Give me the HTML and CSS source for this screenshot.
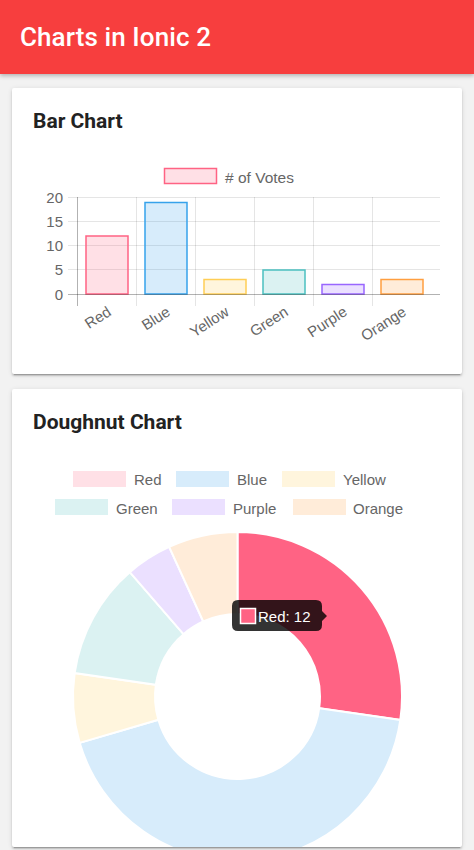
FILE: index.html
```html
<!DOCTYPE html>
<html>
<head>
<meta charset="utf-8">
<link rel="stylesheet" href="styles.css">
</head>
<body>
<header class="toolbar"><div class="toolbar-title">Charts in Ionic 2</div></header>
<main class="content">
  <section class="card card-bar">
    <h2 class="card-title">Bar Chart</h2>
    <svg class="chart" width="450" height="241" viewBox="0 0 450 241">
      <g class="legend">
        <rect x="152.5" y="35.5" width="52" height="15" fill="rgba(255,99,132,0.2)" stroke="#ff6384" stroke-width="1.5"/>
        <text x="213" y="49.5" class="lbl lbl-votes">&#35; of Votes</text>
      </g>
      <g class="grid" stroke="rgba(0,0,0,0.1)" stroke-width="1">
        <line x1="56" y1="64.5" x2="428" y2="64.5"/>
        <line x1="56" y1="88.5" x2="428" y2="88.5"/>
        <line x1="56" y1="112.5" x2="428" y2="112.5"/>
        <line x1="56" y1="136.5" x2="428" y2="136.5"/>
        <line x1="124.5" y1="64" x2="124.5" y2="173"/>
        <line x1="183.5" y1="64" x2="183.5" y2="173"/>
        <line x1="242.5" y1="64" x2="242.5" y2="173"/>
        <line x1="301.5" y1="64" x2="301.5" y2="173"/>
        <line x1="360.5" y1="64" x2="360.5" y2="173"/>
      </g>
      <g class="bars" stroke-width="1.5">
        <rect x="74" y="103" width="42" height="58" fill="rgba(255,99,132,0.2)" stroke="#ff6384"/>
        <rect x="133" y="69.5" width="42" height="91.5" fill="rgba(54,162,235,0.2)" stroke="#36a2eb"/>
        <rect x="192" y="146.5" width="42" height="14.5" fill="rgba(255,206,86,0.2)" stroke="#ffce56"/>
        <rect x="251" y="137" width="42" height="24" fill="rgba(75,192,192,0.2)" stroke="#4bc0c0"/>
        <rect x="310" y="151.5" width="42" height="9.5" fill="rgba(153,102,255,0.2)" stroke="#9966ff"/>
        <rect x="369" y="146.5" width="42" height="14.5" fill="rgba(255,159,64,0.2)" stroke="#ff9f40"/>
      </g>
      <g class="axes" stroke="rgba(0,0,0,0.3)" stroke-width="1">
        <line x1="56" y1="161.5" x2="428" y2="161.5"/>
        <line x1="65.5" y1="64" x2="65.5" y2="173"/>
      </g>
      <g class="ylabels">
        <text x="51" y="69.5" class="lbl" text-anchor="end">20</text>
        <text x="51" y="93.5" class="lbl" text-anchor="end">15</text>
        <text x="51" y="118" class="lbl" text-anchor="end">10</text>
        <text x="51" y="142" class="lbl" text-anchor="end">5</text>
        <text x="51" y="166.5" class="lbl" text-anchor="end">0</text>
      </g>
      <g class="xlabels">
        <text class="lbl" text-anchor="end" dominant-baseline="middle" transform="translate(98 178) rotate(-33)">Red</text>
        <text class="lbl" text-anchor="end" dominant-baseline="middle" transform="translate(157 178) rotate(-33)">Blue</text>
        <text class="lbl" text-anchor="end" dominant-baseline="middle" transform="translate(216 178) rotate(-33)">Yellow</text>
        <text class="lbl" text-anchor="end" dominant-baseline="middle" transform="translate(275 178) rotate(-33)">Green</text>
        <text class="lbl" text-anchor="end" dominant-baseline="middle" transform="translate(334 178) rotate(-33)">Purple</text>
        <text class="lbl" text-anchor="end" dominant-baseline="middle" transform="translate(393 178) rotate(-33)">Orange</text>
      </g>
    </svg>
  </section>
  <section class="card card-doughnut">
    <h2 class="card-title">Doughnut Chart</h2>
    <svg class="chart" width="450" height="413" viewBox="0 0 450 413">
      <g class="legend">
        <rect x="61" y="37" width="53" height="16" fill="rgba(255,99,132,0.2)"/>
        <text x="122" y="50.5" class="lbl">Red</text>
        <rect x="164" y="37" width="53" height="16" fill="rgba(54,162,235,0.2)"/>
        <text x="225" y="50.5" class="lbl">Blue</text>
        <rect x="270" y="37" width="53" height="16" fill="rgba(255,206,86,0.2)"/>
        <text x="331" y="50.5" class="lbl">Yellow</text>
        <rect x="43" y="65" width="53" height="16" fill="rgba(75,192,192,0.2)"/>
        <text x="104" y="79.5" class="lbl">Green</text>
        <rect x="160" y="65" width="53" height="16" fill="rgba(153,102,255,0.2)"/>
        <text x="221" y="79.5" class="lbl">Purple</text>
        <rect x="281" y="65" width="53" height="16" fill="rgba(255,159,64,0.2)"/>
        <text x="341" y="79.5" class="lbl">Orange</text>
      </g>
      <g class="doughnut" stroke="#fff" stroke-width="2">
        <path fill="#ff6384" d="M225.5 98 A164.5 164.5 0 0 1 388.33 285.91 L307.16 274.24 A82.5 82.5 0 0 0 225.5 180 Z"/>
        <path fill="rgba(54,162,235,0.2)" d="M388.33 285.91 A164.5 164.5 0 0 1 67.66 308.84 L146.34 285.74 A82.5 82.5 0 0 0 307.16 274.24 Z"/>
        <path fill="rgba(255,206,86,0.2)" d="M67.66 308.84 A164.5 164.5 0 0 1 62.67 239.09 L143.84 250.76 A82.5 82.5 0 0 0 146.34 285.74 Z"/>
        <path fill="rgba(75,192,192,0.2)" d="M62.67 239.09 A164.5 164.5 0 0 1 117.79 138.17 L171.48 200.14 A82.5 82.5 0 0 0 143.84 250.76 Z"/>
        <path fill="rgba(153,102,255,0.2)" d="M117.79 138.17 A164.5 164.5 0 0 1 157.16 112.87 L191.22 187.46 A82.5 82.5 0 0 0 171.48 200.14 Z"/>
        <path fill="rgba(255,159,64,0.2)" d="M157.16 112.87 A164.5 164.5 0 0 1 225.5 98 L225.5 180 A82.5 82.5 0 0 0 191.22 187.46 Z"/>
      </g>
      <g class="tooltip">
        <path fill="rgba(0,0,0,0.8)" d="M226 166 H304 Q310 166 310 172 V177 L315 182 L310 187 V191 Q310 197 304 197 H226 Q220 197 220 191 V172 Q220 166 226 166 Z"/>
        <rect x="228.5" y="174.5" width="15" height="15" fill="#ff6384" stroke="#fff" stroke-width="1.5"/>
        <text x="246" y="187.5" class="tip">Red: 12</text>
      </g>
    </svg>
  </section>
</main>
</body>
</html>
```
FILE: styles.css
```css
html, body {
  margin: 0;
  padding: 0;
}
body {
  background: #f2f2f2;
  font-family: Roboto, "Liberation Sans", sans-serif;
  width: 474px;
  height: 850px;
  overflow: hidden;
}
.toolbar {
  height: 74px;
  background: #f73e3e;
  display: flex;
  align-items: center;
  padding-left: 20px;
  box-shadow: 0 2px 4px rgba(0,0,0,0.25);
  position: relative;
  z-index: 2;
}
.toolbar-title {
  color: #fff;
  font-size: 26px;
  font-weight: 500;
  letter-spacing: 0.1px;
}
.content {
  display: flex;
  flex-direction: column;
  padding: 0 12px;
}
.card {
  background: #fff;
  border-radius: 2px;
  box-shadow: 0 2px 2px 0 rgba(0,0,0,0.14), 0 3px 1px -2px rgba(0,0,0,0.2), 0 1px 5px 0 rgba(0,0,0,0.12);
  overflow: hidden;
  display: flex;
  flex-direction: column;
}
.card-bar {
  margin-top: 14px;
  height: 286px;
}
.card-doughnut {
  margin-top: 15px;
  height: 458px;
}
.card-title {
  margin: 0;
  padding: 21px 21px 0;
  height: 24px;
  line-height: 24px;
  font-size: 21px;
  font-weight: 700;
  color: #222;
}
.chart {
  display: block;
  flex: none;
}
.lbl {
  font-family: "Liberation Sans", Arial, sans-serif;
  font-size: 15px;
  fill: #666;
}
.lbl-votes {
  font-size: 15.5px;
}
.tip {
  font-family: "Liberation Sans", Arial, sans-serif;
  font-size: 15px;
  fill: #fff;
}
```
